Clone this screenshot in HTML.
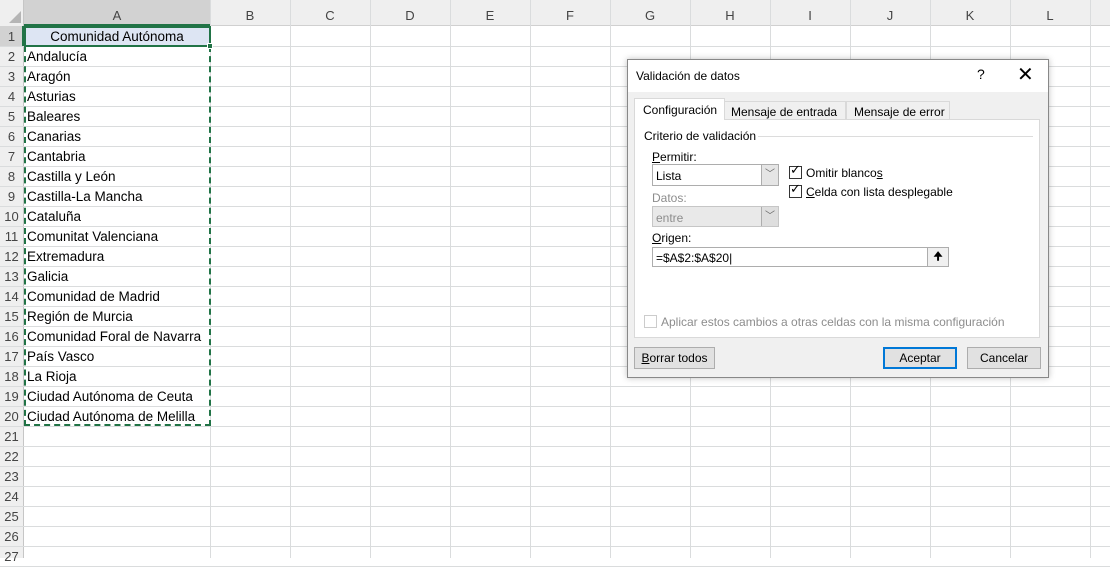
<!DOCTYPE html>
<html><head><meta charset="utf-8"><style>
*{margin:0;padding:0;box-sizing:border-box}
body{width:1110px;height:558px;overflow:hidden;background:#fff;font-family:"Liberation Sans",sans-serif;position:relative}
.a{position:absolute}
.hl{position:absolute;left:0;width:1110px;height:1px;background:#dadcdd}
.vl{position:absolute;top:0;width:1px;height:558px;background:#dadcdd}
.ch{position:absolute;top:8px;font-size:13px;color:#444;text-align:center;width:80px}
.rn{position:absolute;left:0;width:23px;text-align:center;font-size:13px;color:#444}
.cell{position:absolute;left:27px;font-size:13.5px;color:#000}
.d{font-size:12px;color:#000}
.btn{position:absolute;height:22px;background:#e1e1e1;border:1px solid #adadad;font-size:12px;text-align:center;line-height:20px}
.cb{position:absolute;width:13px;height:13px;border:1px solid #333;background:#fff}
</style></head><body>
<div class="a" style="left:0;top:0;width:1110px;height:26px;background:#efefef;border-bottom:1px solid #d0d0d0"></div>
<div class="a" style="left:0;top:0;width:24px;height:558px;background:#efefef;border-right:1px solid #c6c6c6"></div>
<div class="a" style="left:24px;top:0;width:186px;height:26px;background:#d2d2d2;border-bottom:2px solid #217346"></div>
<div class="a" style="left:0;top:26px;width:24px;height:20px;background:#d2d2d2;border-right:2px solid #217346"></div>
<svg class="a" style="left:8px;top:10px" width="14" height="14"><polygon points="13,1 13,13 1,13" fill="#b5b5b5"/></svg>
<div id="g"></div>
<script>
let h='';
const cols=['A','B','C','D','E','F','G','H','I','J','K','L'];
let x=[24,210];for(let i=0;i<11;i++)x.push(290+80*i);
for(let i=1;i<x.length;i++)h+=`<div class="vl" style="left:${x[i]}px"></div>`;
for(let i=0;i<12;i++){let w=i==0?186:80;h+=`<div class="ch" style="left:${x[i]}px;width:${w}px">${cols[i]}</div>`}
for(let r=1;r<=27;r++){let t=26+20*(r-1);h+=`<div class="hl" style="top:${t+20}px"></div><div class="rn" style="top:${t+3}px">${r}</div>`}
const names=["Andalucía","Aragón","Asturias","Baleares","Canarias","Cantabria","Castilla y León","Castilla-La Mancha","Cataluña","Comunitat Valenciana","Extremadura","Galicia","Comunidad de Madrid","Región de Murcia","Comunidad Foral de Navarra","País Vasco","La Rioja","Ciudad Autónoma de Ceuta","Ciudad Autónoma de Melilla"];
names.forEach((n,i)=>{h+=`<div class="cell" style="top:${49+20*i}px">${n}</div>`});
document.getElementById('g').innerHTML=h;
</script>
<div class="a" style="left:25px;top:27px;width:185px;height:19px;background:#dde5f3"></div>
<div class="cell" style="left:24px;width:186px;text-align:center;top:29px">Comunidad Autónoma</div>
<div class="a" style="left:24px;top:26px;width:187px;height:21px;border:2px solid #217346"></div>
<div class="a" style="left:24px;top:46px;width:187px;height:380px;border:2px dashed #217346;border-top:none"></div>
<div class="a" style="left:207px;top:43px;width:6px;height:6px;background:#217346;border:1px solid #fff"></div>

<div class="a" style="left:627px;top:59px;width:422px;height:319px;background:#f0f0f0;border:1px solid #888;box-shadow:0 0 6px rgba(0,0,0,.25)">
 <div class="a" style="left:0;top:0;width:420px;height:32px;background:#fff"></div>
 <div class="a d" style="left:8px;top:9px">Validación de datos</div>
 <div class="a" style="left:349px;top:6px;font-size:14px">?</div>
 <div class="a" style="left:389px;top:2px;font-size:20px;font-weight:300">✕</div>
 <div class="a" style="left:6px;top:59px;width:406px;height:219px;background:#fff;border:1px solid #d9d9d9"></div>
 <div class="a d" style="left:96px;top:41px;width:122px;height:19px;background:#f0f0f0;border:1px solid #d9d9d9;padding:3px 0 0 6px">Mensaje de entrada</div>
 <div class="a d" style="left:218px;top:41px;width:104px;height:19px;background:#f0f0f0;border:1px solid #d9d9d9;padding:3px 0 0 7px">Mensaje de error</div>
 <div class="a d" style="left:6px;top:38px;width:91px;height:22px;background:#fff;border:1px solid #d9d9d9;border-bottom:none;padding:4px 0 0 8px">Configuración</div>
 <div class="a d" style="left:16px;top:69px">Criterio de validación</div>
 <div class="a" style="left:130px;top:76px;width:275px;height:1px;background:#dcdcdc"></div>
 <div class="a d" style="left:24px;top:90px"><u>P</u>ermitir:</div>
 <div class="a d" style="left:24px;top:104px;width:127px;height:22px;border:1px solid #adadad;background:#fff;padding:4px 0 0 3px">Lista</div>
 <div class="a" style="left:133px;top:105px;width:17px;height:20px;background:#e5e5e5;border-left:1px solid #adadad;font-size:10px;color:#666;text-align:center;line-height:20px">﹀</div>
 <div class="a d" style="left:24px;top:131px;color:#8d8d8d">Datos:</div>
 <div class="a d" style="left:24px;top:146px;width:127px;height:21px;border:1px solid #c6c6c6;background:#e9e9e9;padding:4px 0 0 3px;color:#8d8d8d">entre</div>
 <div class="a" style="left:133px;top:147px;width:17px;height:19px;background:#dedede;border-left:1px solid #adadad;font-size:10px;color:#666;text-align:center;line-height:19px">﹀</div>
 <div class="a d" style="left:24px;top:171px"><u>O</u>rigen:</div>
 <div class="a d" style="left:24px;top:187px;width:297px;height:20px;border:1px solid #adadad;background:#fff;padding:3px 0 0 3px">=$A$2:$A$20|</div>
 <div class="a" style="left:299px;top:188px;width:21px;height:18px;background:#f0f0f0;border-left:1px solid #adadad;font-size:11px;font-weight:bold;text-align:center;line-height:18px">🠉</div>
 <div class="cb" style="left:161px;top:106px"></div><div class="a" style="left:162px;top:102px;font-size:13px">✓</div>
 <div class="a d" style="left:178px;top:106px">Omitir blanco<u>s</u></div>
 <div class="cb" style="left:161px;top:125px"></div><div class="a" style="left:162px;top:121px;font-size:13px">✓</div>
 <div class="a d" style="left:178px;top:125px"><u>C</u>elda con lista desplegable</div>
 <div class="cb" style="left:16px;top:255px;border-color:#ccc"></div>
 <div class="a d" style="left:33px;top:255px;color:#8d8d8d">Aplicar estos cambios a otras celdas con la misma configuración</div>
 <div class="btn" style="left:6px;top:287px;width:81px"><u>B</u>orrar todos</div>
 <div class="btn" style="left:255px;top:287px;width:74px;border:2px solid #0078d7;line-height:18px">Aceptar</div>
 <div class="btn" style="left:339px;top:287px;width:74px">Cancelar</div>
</div>
</body></html>
